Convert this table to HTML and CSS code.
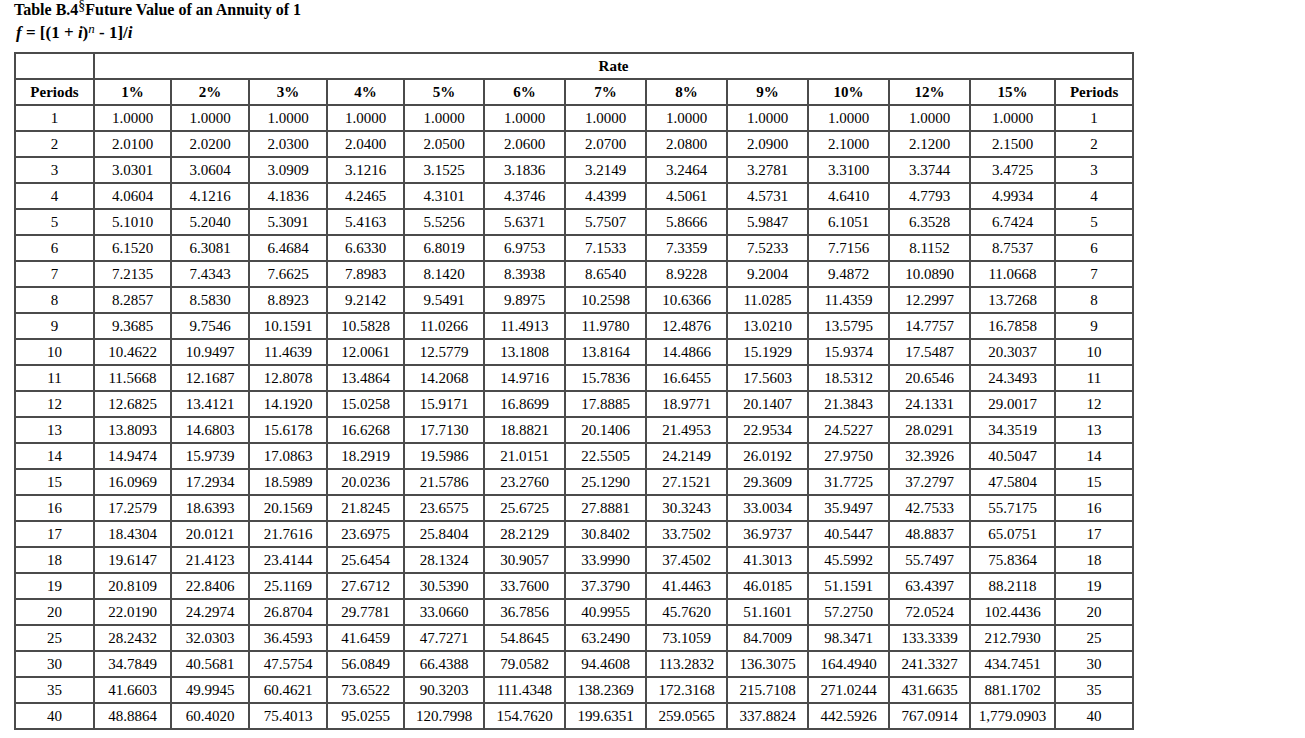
FILE: index.html
```html
<!DOCTYPE html>
<html lang="en">
<head>
<meta charset="utf-8">
<title>Table B.4 Future Value of an Annuity of 1</title>
<link rel="stylesheet" href="styles.css">
</head>
<body>
<div class="page">
  <div class="title">Table B.4<sup class="sect">§</sup>Future Value of an Annuity of 1</div>
  <div class="formula"><i>f</i> = [(1 + <i>i</i>)<sup><i>n</i></sup> - 1]/<i>i</i></div>
  <table class="fv">
    <colgroup>
      <col class="c79"><col class="c77"><col class="c78"><col class="c78"><col class="c77"><col class="c80"><col class="c81"><col class="c81"><col class="c81"><col class="c81"><col class="c81"><col class="c81"><col class="c85"><col class="c78">
    </colgroup>
    <thead>
      <tr><th></th><th colspan="13">Rate</th></tr>
      <tr><th>Periods</th><th>1%</th><th>2%</th><th>3%</th><th>4%</th><th>5%</th><th>6%</th><th>7%</th><th>8%</th><th>9%</th><th>10%</th><th>12%</th><th>15%</th><th>Periods</th></tr>
    </thead>
    <tbody>
      <tr><td>1</td><td>1.0000</td><td>1.0000</td><td>1.0000</td><td>1.0000</td><td>1.0000</td><td>1.0000</td><td>1.0000</td><td>1.0000</td><td>1.0000</td><td>1.0000</td><td>1.0000</td><td>1.0000</td><td>1</td></tr>
      <tr><td>2</td><td>2.0100</td><td>2.0200</td><td>2.0300</td><td>2.0400</td><td>2.0500</td><td>2.0600</td><td>2.0700</td><td>2.0800</td><td>2.0900</td><td>2.1000</td><td>2.1200</td><td>2.1500</td><td>2</td></tr>
      <tr><td>3</td><td>3.0301</td><td>3.0604</td><td>3.0909</td><td>3.1216</td><td>3.1525</td><td>3.1836</td><td>3.2149</td><td>3.2464</td><td>3.2781</td><td>3.3100</td><td>3.3744</td><td>3.4725</td><td>3</td></tr>
      <tr><td>4</td><td>4.0604</td><td>4.1216</td><td>4.1836</td><td>4.2465</td><td>4.3101</td><td>4.3746</td><td>4.4399</td><td>4.5061</td><td>4.5731</td><td>4.6410</td><td>4.7793</td><td>4.9934</td><td>4</td></tr>
      <tr><td>5</td><td>5.1010</td><td>5.2040</td><td>5.3091</td><td>5.4163</td><td>5.5256</td><td>5.6371</td><td>5.7507</td><td>5.8666</td><td>5.9847</td><td>6.1051</td><td>6.3528</td><td>6.7424</td><td>5</td></tr>
      <tr><td>6</td><td>6.1520</td><td>6.3081</td><td>6.4684</td><td>6.6330</td><td>6.8019</td><td>6.9753</td><td>7.1533</td><td>7.3359</td><td>7.5233</td><td>7.7156</td><td>8.1152</td><td>8.7537</td><td>6</td></tr>
      <tr><td>7</td><td>7.2135</td><td>7.4343</td><td>7.6625</td><td>7.8983</td><td>8.1420</td><td>8.3938</td><td>8.6540</td><td>8.9228</td><td>9.2004</td><td>9.4872</td><td>10.0890</td><td>11.0668</td><td>7</td></tr>
      <tr><td>8</td><td>8.2857</td><td>8.5830</td><td>8.8923</td><td>9.2142</td><td>9.5491</td><td>9.8975</td><td>10.2598</td><td>10.6366</td><td>11.0285</td><td>11.4359</td><td>12.2997</td><td>13.7268</td><td>8</td></tr>
      <tr><td>9</td><td>9.3685</td><td>9.7546</td><td>10.1591</td><td>10.5828</td><td>11.0266</td><td>11.4913</td><td>11.9780</td><td>12.4876</td><td>13.0210</td><td>13.5795</td><td>14.7757</td><td>16.7858</td><td>9</td></tr>
      <tr><td>10</td><td>10.4622</td><td>10.9497</td><td>11.4639</td><td>12.0061</td><td>12.5779</td><td>13.1808</td><td>13.8164</td><td>14.4866</td><td>15.1929</td><td>15.9374</td><td>17.5487</td><td>20.3037</td><td>10</td></tr>
      <tr><td>11</td><td>11.5668</td><td>12.1687</td><td>12.8078</td><td>13.4864</td><td>14.2068</td><td>14.9716</td><td>15.7836</td><td>16.6455</td><td>17.5603</td><td>18.5312</td><td>20.6546</td><td>24.3493</td><td>11</td></tr>
      <tr><td>12</td><td>12.6825</td><td>13.4121</td><td>14.1920</td><td>15.0258</td><td>15.9171</td><td>16.8699</td><td>17.8885</td><td>18.9771</td><td>20.1407</td><td>21.3843</td><td>24.1331</td><td>29.0017</td><td>12</td></tr>
      <tr><td>13</td><td>13.8093</td><td>14.6803</td><td>15.6178</td><td>16.6268</td><td>17.7130</td><td>18.8821</td><td>20.1406</td><td>21.4953</td><td>22.9534</td><td>24.5227</td><td>28.0291</td><td>34.3519</td><td>13</td></tr>
      <tr><td>14</td><td>14.9474</td><td>15.9739</td><td>17.0863</td><td>18.2919</td><td>19.5986</td><td>21.0151</td><td>22.5505</td><td>24.2149</td><td>26.0192</td><td>27.9750</td><td>32.3926</td><td>40.5047</td><td>14</td></tr>
      <tr><td>15</td><td>16.0969</td><td>17.2934</td><td>18.5989</td><td>20.0236</td><td>21.5786</td><td>23.2760</td><td>25.1290</td><td>27.1521</td><td>29.3609</td><td>31.7725</td><td>37.2797</td><td>47.5804</td><td>15</td></tr>
      <tr><td>16</td><td>17.2579</td><td>18.6393</td><td>20.1569</td><td>21.8245</td><td>23.6575</td><td>25.6725</td><td>27.8881</td><td>30.3243</td><td>33.0034</td><td>35.9497</td><td>42.7533</td><td>55.7175</td><td>16</td></tr>
      <tr><td>17</td><td>18.4304</td><td>20.0121</td><td>21.7616</td><td>23.6975</td><td>25.8404</td><td>28.2129</td><td>30.8402</td><td>33.7502</td><td>36.9737</td><td>40.5447</td><td>48.8837</td><td>65.0751</td><td>17</td></tr>
      <tr><td>18</td><td>19.6147</td><td>21.4123</td><td>23.4144</td><td>25.6454</td><td>28.1324</td><td>30.9057</td><td>33.9990</td><td>37.4502</td><td>41.3013</td><td>45.5992</td><td>55.7497</td><td>75.8364</td><td>18</td></tr>
      <tr><td>19</td><td>20.8109</td><td>22.8406</td><td>25.1169</td><td>27.6712</td><td>30.5390</td><td>33.7600</td><td>37.3790</td><td>41.4463</td><td>46.0185</td><td>51.1591</td><td>63.4397</td><td>88.2118</td><td>19</td></tr>
      <tr><td>20</td><td>22.0190</td><td>24.2974</td><td>26.8704</td><td>29.7781</td><td>33.0660</td><td>36.7856</td><td>40.9955</td><td>45.7620</td><td>51.1601</td><td>57.2750</td><td>72.0524</td><td>102.4436</td><td>20</td></tr>
      <tr><td>25</td><td>28.2432</td><td>32.0303</td><td>36.4593</td><td>41.6459</td><td>47.7271</td><td>54.8645</td><td>63.2490</td><td>73.1059</td><td>84.7009</td><td>98.3471</td><td>133.3339</td><td>212.7930</td><td>25</td></tr>
      <tr><td>30</td><td>34.7849</td><td>40.5681</td><td>47.5754</td><td>56.0849</td><td>66.4388</td><td>79.0582</td><td>94.4608</td><td>113.2832</td><td>136.3075</td><td>164.4940</td><td>241.3327</td><td>434.7451</td><td>30</td></tr>
      <tr><td>35</td><td>41.6603</td><td>49.9945</td><td>60.4621</td><td>73.6522</td><td>90.3203</td><td>111.4348</td><td>138.2369</td><td>172.3168</td><td>215.7108</td><td>271.0244</td><td>431.6635</td><td>881.1702</td><td>35</td></tr>
      <tr><td>40</td><td>48.8864</td><td>60.4020</td><td>75.4013</td><td>95.0255</td><td>120.7998</td><td>154.7620</td><td>199.6351</td><td>259.0565</td><td>337.8824</td><td>442.5926</td><td>767.0914</td><td>1,779.0903</td><td>40</td></tr>
    </tbody>
  </table>
</div>
</body>
</html>
```

FILE: styles.css
```css
html, body {
  margin: 0;
  padding: 0;
  background: #ffffff;
}

body {
  font-family: "Liberation Serif", "Times New Roman", serif;
  color: #000000;
  font-size: 15px;
}

.page {
  padding: 0 0 0 14px;
}

.title {
  font-weight: bold;
  font-size: 16px;
  line-height: 20px;
}

.sect {
  font-size: 14px;
  line-height: 0;
  vertical-align: 5px;
  font-weight: normal;
}

.formula {
  font-weight: bold;
  font-size: 17px;
  line-height: 20px;
  margin-top: 3px;
  margin-bottom: 9px;
  padding-left: 2px;
}

.formula sup {
  font-size: 13px;
  line-height: 0;
  vertical-align: 5px;
  font-weight: normal;
}

.fv {
  border-collapse: collapse;
  table-layout: fixed;
  width: 1120px;
  border: 2px solid #4b4b4b;
}

.fv th,
.fv td {
  border: 2px solid #4b4b4b;
  padding: 0;
  height: 24px;
  line-height: 24px;
  text-align: center;
  font-size: 15px;
  white-space: nowrap;
}

.fv th {
  font-weight: bold;
}

.fv td {
  font-weight: normal;
}

.c77 { width: 77px; }
.c78 { width: 78px; }
.c79 { width: 79px; }
.c80 { width: 80px; }
.c81 { width: 81px; }
.c85 { width: 85px; }
```
